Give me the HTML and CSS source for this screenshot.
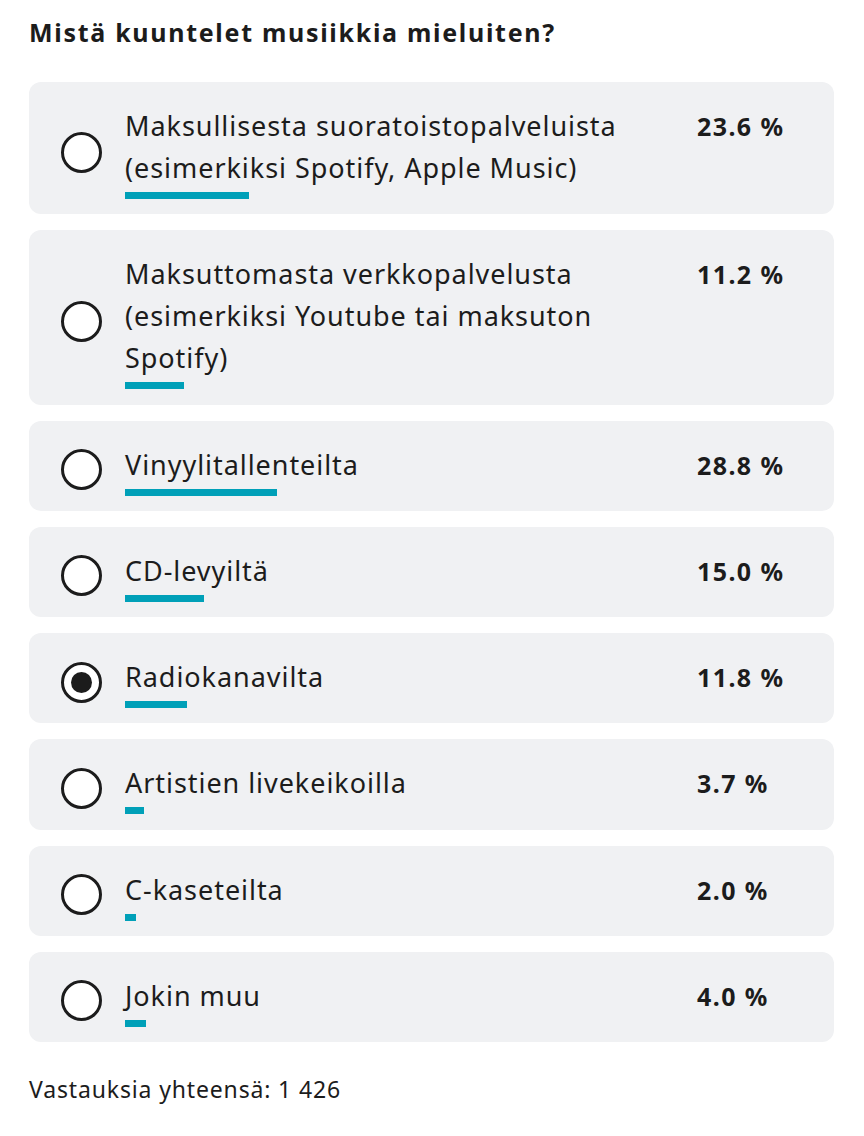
FILE: index.html
```html
<!DOCTYPE html>
<html lang="fi">
<head>
<meta charset="utf-8">
<link rel="stylesheet" href="styles.css">
</head>
<body>
<main class="poll">
  <h1 class="poll-title">Mistä kuuntelet musiikkia mieluiten?</h1>
  <ul class="options">
    <li class="option">
      <span class="radio"></span>
      <div class="option-body">
        <div class="option-label">Maksullisesta suoratoistopalveluista (esimerkiksi Spotify, Apple Music)</div>
        <div class="bar" style="width:23.6%"></div>
      </div>
      <div class="percent">23.6 %</div>
    </li>
    <li class="option">
      <span class="radio"></span>
      <div class="option-body">
        <div class="option-label">Maksuttomasta verkkopalvelusta (esimerkiksi Youtube tai maksuton Spotify)</div>
        <div class="bar" style="width:11.2%"></div>
      </div>
      <div class="percent">11.2 %</div>
    </li>
    <li class="option">
      <span class="radio"></span>
      <div class="option-body">
        <div class="option-label">Vinyylitallenteilta</div>
        <div class="bar" style="width:28.8%"></div>
      </div>
      <div class="percent">28.8 %</div>
    </li>
    <li class="option">
      <span class="radio"></span>
      <div class="option-body">
        <div class="option-label">CD-levyiltä</div>
        <div class="bar" style="width:15.0%"></div>
      </div>
      <div class="percent">15.0 %</div>
    </li>
    <li class="option">
      <span class="radio radio-checked"></span>
      <div class="option-body">
        <div class="option-label">Radiokanavilta</div>
        <div class="bar" style="width:11.8%"></div>
      </div>
      <div class="percent">11.8 %</div>
    </li>
    <li class="option">
      <span class="radio"></span>
      <div class="option-body">
        <div class="option-label">Artistien livekeikoilla</div>
        <div class="bar" style="width:3.7%"></div>
      </div>
      <div class="percent">3.7 %</div>
    </li>
    <li class="option">
      <span class="radio"></span>
      <div class="option-body">
        <div class="option-label">C-kaseteilta</div>
        <div class="bar" style="width:2.0%"></div>
      </div>
      <div class="percent">2.0 %</div>
    </li>
    <li class="option">
      <span class="radio"></span>
      <div class="option-body">
        <div class="option-label">Jokin muu</div>
        <div class="bar" style="width:4.0%"></div>
      </div>
      <div class="percent">4.0 %</div>
    </li>
  </ul>
  <p class="total">Vastauksia yhteensä: 1 426</p>
</main>
</body>
</html>
```
FILE: styles.css
```css
html, body {
  margin: 0;
  padding: 0;
  background: #ffffff;
}
body {
  font-family: "Noto Sans", "Open Sans", sans-serif;
  color: #1c1c1c;
}
.poll {
  padding: 14px 30px 0 29px;
}
.poll-title {
  margin: 0;
  font-size: 25px;
  font-weight: 700;
  line-height: 36px;
  letter-spacing: 1.7px;
}
.options {
  list-style: none;
  margin: 32px 0 0 0;
  padding: 0;
  display: flex;
  flex-direction: column;
  gap: 16px;
}
.option {
  display: flex;
  align-items: center;
  background: #f0f1f3;
  border-radius: 12px;
  padding: 23px 0 15.25px 32px;
}
.radio {
  flex: none;
  box-sizing: border-box;
  width: 41px;
  height: 41px;
  border: 3px solid #1c1c1c;
  border-radius: 50%;
  background: #ffffff;
  display: flex;
  align-items: center;
  justify-content: center;
}
.radio-checked::after {
  content: "";
  width: 21px;
  height: 21px;
  border-radius: 50%;
  background: #1c1c1c;
}
.option-body {
  flex: 0 0 527px;
  margin-left: 23px;
}
.option-label {
  font-size: 27px;
  line-height: 42px;
  letter-spacing: 0.95px;
}
.bar {
  height: 7px;
  margin-top: 3px;
  background: #00a0b8;
}
.percent {
  align-self: flex-start;
  margin-left: 45px;
  font-size: 25px;
  font-weight: 700;
  line-height: 42px;
  white-space: nowrap;
  letter-spacing: 1.4px;
}
.total {
  margin: 31px 0 0 0;
  font-size: 23px;
  line-height: 32px;
  letter-spacing: 0.85px;
}
```
